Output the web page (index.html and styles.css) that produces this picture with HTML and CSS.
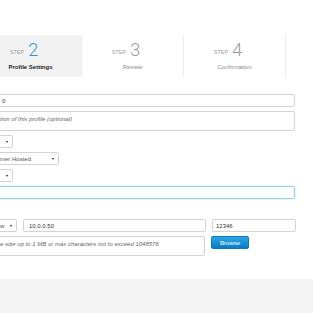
FILE: index.html
```html
<!DOCTYPE html>
<html lang="en">
<head>
    <meta charset="UTF-8">
    <meta name="viewport" content="width=device-width, initial-scale=1.0">
    <title>Profile Settings</title>
    <link rel="stylesheet" href="styles.css">
</head>
<body>
    <div class="wizard">
        <div class="step active">
            <div class="step-head"><span class="step-word">Step</span><span class="step-num">2</span></div>
            <div class="step-label">Profile Settings</div>
        </div>
        <div class="step">
            <div class="step-head"><span class="step-word">Step</span><span class="step-num">3</span></div>
            <div class="step-label">Review</div>
        </div>
        <div class="step">
            <div class="step-head"><span class="step-word">Step</span><span class="step-num">4</span></div>
            <div class="step-label">Confirmation</div>
        </div>
    </div>

    <form class="profile-form">
        <input class="field field-full" type="text" value="0">
        <textarea class="field area field-full" placeholder="tion of this profile (optional)"></textarea>
        <div class="field select select-xs"><span></span><i class="caret"></i></div>
        <div class="field select select-md"><span>mer Hosted</span><i class="caret"></i></div>
        <div class="field select select-xs"><span></span><i class="caret"></i></div>
        <input class="field field-full focused" type="text" value="">

        <div class="form-row spaced">
            <div class="field select select-sm"><span>w</span><i class="caret"></i></div>
            <input class="field field-host" type="text" value="10.0.0.50">
            <input class="field field-port" type="text" value="12346">
        </div>
        <div class="form-row">
            <textarea class="field area field-file" placeholder="e size up to 1 MB or max characters not to exceed 1048576"></textarea>
            <button type="button" class="browse-button">Browse</button>
        </div>
    </form>

    <div class="footer"></div>
</body>
</html>
```

FILE: styles.css
```css
:root {
    --border-color: #d3d3d3;
    --accent-color: #1ba0d8;
    --muted-text: #8a8a8a;
    --step-bg: #f2f2f2;
    --footer-bg: #f3f3f3;
}

body {
    font-family: 'Liberation Sans', Arial, sans-serif;
    font-size: 6px;
    margin: 0;
    background: #fff;
    color: #333;
    overflow: hidden;
}

.wizard {
    display: flex;
    margin: 35px 0 0 -20px;
    height: 42px;
}

.step {
    width: 101px;
    border-right: 1px solid #ececec;
    text-align: center;
    color: var(--muted-text);
    padding-top: 6px;
    box-sizing: content-box;
}

.step.active {
    background: var(--step-bg);
}

.step-head {
    padding-right: 13px;
    line-height: 17px;
    height: 17px;
}

.step-word {
    font-size: 5.5px;
    text-transform: uppercase;
    color: #a0a0a0;
    margin-right: 4px;
    vertical-align: 2px;
}

.step-num {
    font-family: 'Roboto', 'Open Sans', sans-serif;
    font-weight: 300;
    font-size: 18px;
    color: #999;
}

.step.active .step-num {
    color: var(--accent-color);
}

.step-label {
    margin-top: 6px;
}

.step.active .step-label {
    color: #222;
    font-weight: bold;
}

.profile-form {
    display: flex;
    flex-direction: column;
    align-items: flex-start;
    gap: 4px;
    margin: 17px 0 0 -10px;
}

.field {
    box-sizing: border-box;
    height: 13px;
    margin: 0;
    border: 1px solid var(--border-color);
    border-radius: 2px;
    background: #fff;
    font-family: inherit;
    font-size: 6px;
    color: #333;
    padding: 0 0 0 11px;
    outline: none;
}

.field-full {
    width: 305px;
}

.area {
    height: 20px;
    padding-top: 3px;
    padding-left: 9px;
    resize: none;
    line-height: 8px;
}

.area::placeholder {
    font-style: italic;
    color: #666;
}

.select {
    display: flex;
    align-items: center;
    justify-content: space-between;
    padding-left: 9px;
    padding-right: 4px;
}

.select-xs { width: 23px; }
.select-sm { width: 27px; }
.select-md { width: 69px; }

.select span {
    color: #555;
}

.caret {
    width: 0;
    height: 0;
    border-left: 1.5px solid transparent;
    border-right: 1.5px solid transparent;
    border-top: 2.5px solid #222;
}

.focused {
    border-color: #93d2ec;
    box-shadow: 0 0 2px rgba(82, 180, 230, 0.45);
}

.form-row {
    display: flex;
    align-items: flex-start;
    gap: 6px;
}

.form-row.spaced {
    margin-top: 16px;
}

.field-host {
    width: 183px;
    padding-left: 5px;
}

.field-port {
    width: 84px;
    padding-left: 3px;
}

.field-file {
    width: 215px;
    padding-left: 9px;
}

.browse-button {
    width: 38px;
    height: 13px;
    padding: 0;
    border: 1px solid #0c79bd;
    border-radius: 2px;
    background: linear-gradient(#2ba6e2, #0a7cc5);
    color: #fff;
    font-family: inherit;
    font-size: 6px;
    cursor: pointer;
}

.footer {
    margin-top: 23px;
    height: 40px;
    background: var(--footer-bg);
}
```
